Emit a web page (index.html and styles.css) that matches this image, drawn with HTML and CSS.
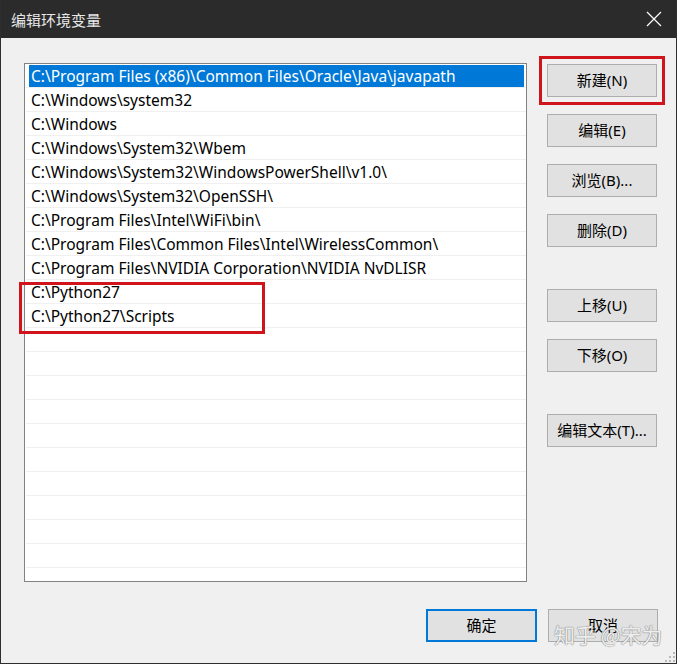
FILE: index.html
```html
<!DOCTYPE html>
<html lang="zh-CN">
<head>
<meta charset="utf-8">
<title>编辑环境变量</title>
<link rel="stylesheet" href="styles.css">
</head>
<body>
<div class="window">
  <div class="titlebar">
    <span class="title">编辑环境变量</span>
    <span class="close">
      <svg width="16" height="16" viewBox="0 0 16 16"><path d="M1 1 L15 15 M15 1 L1 15" stroke="#ffffff" stroke-width="1.2" fill="none"/></svg>
    </span>
  </div>
  <div class="content">
    <div class="main">
      <div class="list">
        <div class="rows">
          <div class="row selected"><span>C:\Program Files (x86)\Common Files\Oracle\Java\javapath</span></div>
          <div class="row"><span>C:\Windows\system32</span></div>
          <div class="row"><span>C:\Windows</span></div>
          <div class="row"><span>C:\Windows\System32\Wbem</span></div>
          <div class="row"><span>C:\Windows\System32\WindowsPowerShell\v1.0\</span></div>
          <div class="row"><span>C:\Windows\System32\OpenSSH\</span></div>
          <div class="row"><span>C:\Program Files\Intel\WiFi\bin\</span></div>
          <div class="row"><span>C:\Program Files\Common Files\Intel\WirelessCommon\</span></div>
          <div class="row"><span>C:\Program Files\NVIDIA Corporation\NVIDIA NvDLISR</span></div>
          <div class="row"><span>C:\Python27</span></div>
          <div class="row"><span>C:\Python27\Scripts</span></div>
          <div class="row"></div>
          <div class="row"></div>
          <div class="row"></div>
          <div class="row"></div>
          <div class="row"></div>
          <div class="row"></div>
          <div class="row"></div>
          <div class="row"></div>
          <div class="row"></div>
          <div class="row"></div>
          <div class="row"></div>
        </div>
        <div class="mark mark-rows"></div>
      </div>
      <div class="side">
        <div class="btn marked">新建(N)</div>
        <div class="btn">编辑(E)</div>
        <div class="btn">浏览(B)...</div>
        <div class="btn">删除(D)</div>
        <div class="btn far">上移(U)</div>
        <div class="btn">下移(O)</div>
        <div class="btn far">编辑文本(T)...</div>
      </div>
    </div>
    <div class="footer">
      <div class="btn default">确定</div>
      <div class="btn">取消</div>
    </div>
    <div class="watermark">知乎 @宋为</div>
    <svg class="grip" width="10" height="10" viewBox="0 0 10 10">
      <rect x="8" y="0" width="2" height="2" fill="#b8b8b8"/>
      <rect x="4" y="4" width="2" height="2" fill="#b8b8b8"/>
      <rect x="8" y="4" width="2" height="2" fill="#b8b8b8"/>
      <rect x="0" y="8" width="2" height="2" fill="#b8b8b8"/>
      <rect x="4" y="8" width="2" height="2" fill="#b8b8b8"/>
      <rect x="8" y="8" width="2" height="2" fill="#b8b8b8"/>
    </svg>
  </div>
</div>
</body>
</html>
```
FILE: styles.css
```css
html, body {
  margin: 0;
  padding: 0;
  background: #f0f0f0;
}
body {
  font-family: "Noto Sans", "Noto Sans CJK SC", sans-serif;
  font-size: 15px;
  color: #000;
}
.window {
  width: 677px;
  height: 664px;
  box-sizing: border-box;
  border: 1px solid #2e2e2e;
  border-top: none;
  display: flex;
  flex-direction: column;
  background: #f0f0f0;
  overflow: hidden;
}
.titlebar {
  height: 38px;
  flex: none;
  background: #2b2b2b;
  display: flex;
  align-items: center;
  justify-content: space-between;
  padding-left: 10px;
}
.title {
  color: #e8e8e8;
  font-family: "Noto Sans CJK SC", sans-serif;
  font-size: 15px;
  line-height: 1;
}
.close {
  width: 44px;
  height: 38px;
  display: flex;
  align-items: center;
  justify-content: center;
}
.content {
  flex: 1;
  position: relative;
  padding: 25px 0 0 23px;
  display: flex;
  flex-direction: column;
}
.main {
  display: flex;
  gap: 20px;
}
.list {
  position: relative;
  width: 503px;
  height: 519px;
  box-sizing: border-box;
  border: 1px solid #828282;
  background: #fff;
}
.rows {
  height: 100%;
  overflow: hidden;
  padding-left: 1px;
}
.row {
  height: 24px;
  box-sizing: border-box;
  border-bottom: 1px solid #f0f0f0;
  display: flex;
  align-items: center;
  padding-left: 5px;
  padding-top: 2px;
  white-space: nowrap;
  line-height: 1;
  font-size: 15.5px;
}
.row.selected {
  padding-top: 0;
}
.row.selected span {
  display: flex;
  align-items: center;
  background: #0078d7;
  color: #fff;
  width: 100%;
  height: 22px;
  margin-left: -2px;
  padding-left: 2px;
  padding-top: 2px;
  box-sizing: border-box;
}
.mark-rows {
  position: absolute;
  left: -6px;
  top: 218px;
  width: 240px;
  height: 46px;
  border: 3px solid #d0141c;
}
.side {
  display: flex;
  flex-direction: column;
  gap: 17px;
  padding-top: 1px;
}
.btn {
  width: 110px;
  height: 33px;
  box-sizing: border-box;
  background: #e1e1e1;
  border: 1px solid #adadad;
  display: flex;
  align-items: center;
  justify-content: center;
  font-size: 15px;
  line-height: 1;
}
.btn.far {
  margin-top: 25px;
}
.btn.marked {
  outline: 3px solid #d0141c;
  outline-offset: 5px;
}
.footer {
  display: flex;
  justify-content: flex-end;
  gap: 11px;
  margin-top: 27px;
  padding-right: 18px;
}
.btn.default {
  width: 111px;
  border: 2px solid #0078d7;
}
.watermark {
  position: absolute;
  left: 553px;
  top: 586px;
  font-family: "Noto Sans CJK SC", sans-serif;
  font-size: 21px;
  color: rgba(255, 255, 255, 0.9);
  text-shadow: 0 0 1px #777, 0 0 1px #777;
  line-height: 1;
}
.grip {
  position: absolute;
  right: 1px;
  bottom: 1px;
}
```
